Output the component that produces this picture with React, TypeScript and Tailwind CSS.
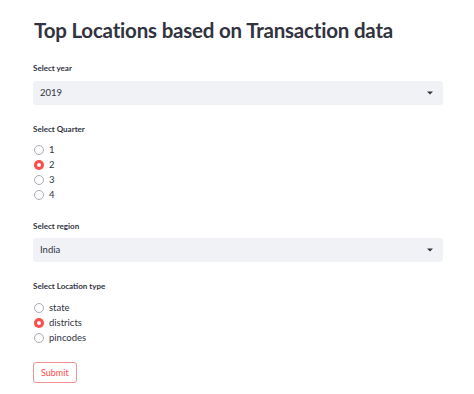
import React from "react";

const font = { fontFamily: "Lato, 'Noto Sans', sans-serif" };

function Label({ children, mt }: { children: React.ReactNode; mt: string }) {
  return (
    <div className={`${mt} h-[12px] leading-[12px] text-[8px] font-bold text-[#31333f]`}>{children}</div>
  );
}

function Radio({ label, checked }: { label: string; checked?: boolean }) {
  return (
    <div className="h-[15px] flex items-center gap-[5px] pl-[1px]">
      {checked ? (
        <span className="w-[10px] h-[10px] rounded-full bg-[#ff4b4b] flex items-center justify-center">
          <span className="w-[4px] h-[4px] rounded-full bg-white" />
        </span>
      ) : (
        <span className="w-[10px] h-[10px] rounded-full border border-[#a8acb8] bg-white" />
      )}
      <span className="text-[9.5px] leading-[15px] text-[#31333f]">{label}</span>
    </div>
  );
}

function Select({ value, mt }: { value: string; mt: string }) {
  return (
    <div className={`${mt} h-[24px] rounded-[3px] bg-[#f0f2f6] flex items-center justify-between pl-[7px] pr-[10px]`}>
      <span className="text-[9.5px] text-[#31333f]">{value}</span>
      <svg width="6" height="4" viewBox="0 0 6 4">
        <path d="M0 0.5 L6 0.5 L3 3.5 Z" fill="#31333f" />
      </svg>
    </div>
  );
}

export default function App() {
  return (
    <div className="w-[474px] h-[394px] bg-white pl-[33px] pr-[31px] overflow-hidden" style={font}>
      <div className="mt-[16px] h-[28px] leading-[28px] text-[20.5px] tracking-[-0.2px] font-bold text-[#31333f] pl-[1px]">
        Top Locations based on Transaction data
      </div>
      <Label mt="mt-[18px]">Select year</Label>
      <Select value="2019" mt="mt-[7px]" />
      <Label mt="mt-[18px]">Select Quarter</Label>
      <div className="mt-[7px] flex flex-col">
        <Radio label="1" />
        <Radio label="2" checked />
        <Radio label="3" />
        <Radio label="4" />
      </div>
      <Label mt="mt-[18px]">Select region</Label>
      <Select value="India" mt="mt-[6px]" />
      <Label mt="mt-[18px]">Select Location type</Label>
      <div className="mt-[8px] flex flex-col">
        <Radio label="state" />
        <Radio label="districts" checked />
        <Radio label="pincodes" />
      </div>
      <button className="mt-[17px] h-[21px] px-[7px] rounded-[3px] border border-[#f29191] bg-white text-[9px] text-[#ff4b4b] flex items-center">
        Submit
      </button>
    </div>
  );
}
